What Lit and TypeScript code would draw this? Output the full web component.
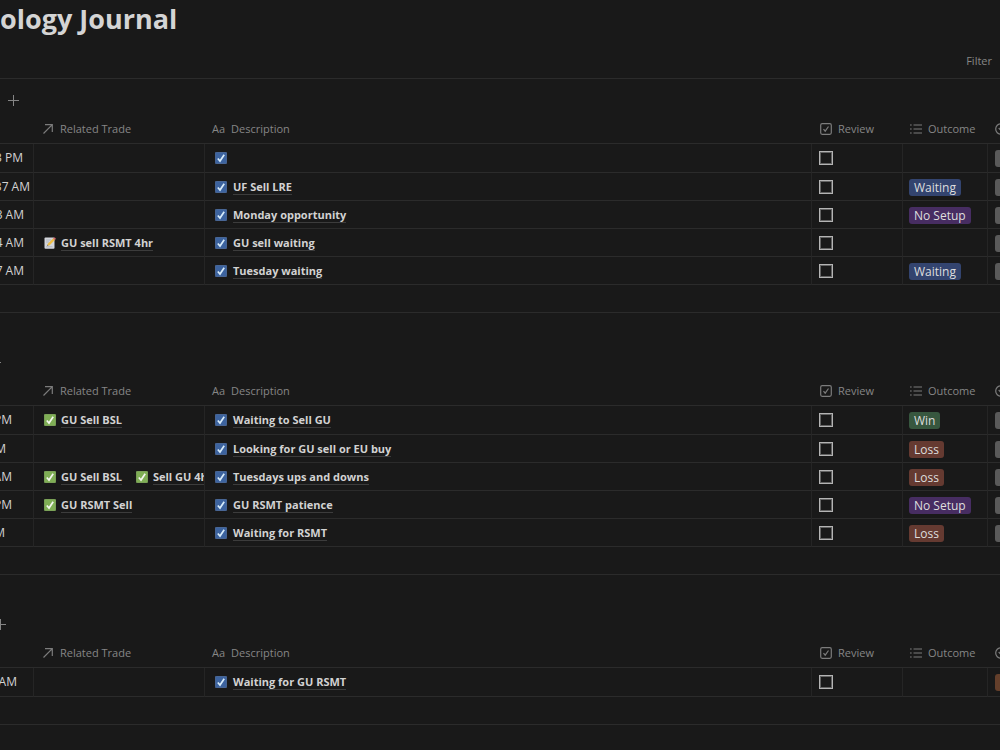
import { LitElement, html, css, svg, nothing } from "lit";
import { customElement, property } from "lit/decorators.js";

type Icon = "check" | "memo";
interface Trade { icon: Icon; name: string; }
interface Entry {
  time: string;
  timeEnd: number;
  trades?: Trade[];
  title?: string;
  outcome?: "Waiting" | "No Setup" | "Win" | "Loss";
  grade?: "gray" | "brown";
}
interface View { addStart: number; entries: Entry[]; }

const views: View[] = [
  {
    addStart: 8,
    entries: [
      { time: "3 PM", timeEnd: 23 },
      { time: "37 AM", timeEnd: 30, title: "UF Sell LRE", outcome: "Waiting" },
      { time: "3 AM", timeEnd: 24, title: "Monday opportunity", outcome: "No Setup" },
      { time: "4 AM", timeEnd: 24, trades: [{ icon: "memo", name: "GU sell RSMT 4hr" }], title: "GU sell waiting" },
      { time: "7 AM", timeEnd: 24, title: "Tuesday waiting", outcome: "Waiting" },
    ],
  },
  {
    addStart: -10,
    entries: [
      { time: "PM", timeEnd: 12, trades: [{ icon: "check", name: "GU Sell BSL" }], title: "Waiting to Sell GU", outcome: "Win" },
      { time: "M", timeEnd: 6, title: "Looking for GU sell or EU buy", outcome: "Loss" },
      {
        time: "AM", timeEnd: 12,
        trades: [{ icon: "check", name: "GU Sell BSL" }, { icon: "check", name: "Sell GU 4hr" }],
        title: "Tuesdays ups and downs", outcome: "Loss",
      },
      { time: "PM", timeEnd: 12, trades: [{ icon: "check", name: "GU RSMT Sell" }], title: "GU RSMT patience", outcome: "No Setup" },
      { time: "M", timeEnd: 5, title: "Waiting for RSMT", outcome: "Loss" },
    ],
  },
  {
    addStart: -5,
    entries: [{ time: "AM", timeEnd: 17, title: "Waiting for GU RSMT", grade: "brown" }],
  },
];

const checkEmoji = (fill: string, edge: string, tick: string) => html`<svg class="emoji" viewBox="0 0 12 12" aria-hidden="true">
  ${svg`<rect x="0.3" y="0.3" width="11.4" height="11.4" rx="1" fill=${fill} stroke=${edge} stroke-width="0.6"/>
  <path d="M2.8 6.5 5 9 9.2 2.8" fill="none" stroke=${tick} stroke-width="1.7"/>`}
</svg>`;

const memoEmoji = html`<svg class="emoji" viewBox="0 0 12 12" aria-hidden="true">
  <rect x="0.5" y="0.5" width="10" height="11.2" rx="1" fill="#d3d6dc"/>
  <path d="M2 3h5M2 5h3M2 9.8h6.500" stroke="#a3a9b4" stroke-width="0.7"/>
  <path d="M3.200 8.800 4 6.400 9 1.400 10.800 3.100 5.700 8.200Z" fill="#edbd45"/>
  <path d="M9 1.400 9.900 0.500Q10.800 0.200 11.500 1.100 11.900 1.800 11.500 2.400L10.800 3.100Z" fill="#d46a6a"/>
  <path d="M3.200 8.800 3.600 7.600 4.400 8.400Z" fill="#444"/>
</svg>`;

@customElement("journal-table")
export class JournalTable extends LitElement {
  @property({ attribute: false }) entries: Entry[] = [];

  static styles = css`
    :host { display: block; }
    table { width: 100%; table-layout: fixed; border-collapse: separate; border-spacing: 0; }
    .c-time { width: 34px; }
    .c-trade { width: 171px; }
    .c-review { width: 91px; }
    .c-outcome { width: 85px; }
    .c-grade { width: 12px; }
    th, td { padding: 0; overflow: hidden; white-space: nowrap; text-align: left; box-sizing: border-box; vertical-align: middle; line-height: 16px; }
    th { height: 29px; border-bottom: 1px solid #2b2b2b; font-size: 11px; font-weight: 400; color: #868686; }
    td { height: 28px; border-bottom: 1px solid #2b2b2b; border-right: 1px solid #252525; color: #d2d2d2; }
    td:last-child { border-right: none; }
    tr.first td { height: 29px; }
    .cell { display: flex; align-items: center; }
    .head { gap: 6px; }
    .icon { width: 12px; height: 12px; flex: none; fill: none; stroke: #7c7c7c; stroke-width: 1.2; }
    .pad { padding-left: 8px; }
    .pad-desc { padding-left: 7px; }
    .head-desc { gap: 6px; }
    .trades { padding-left: 10px; gap: 14px; }
    .title { padding-left: 10px; }
    .link { display: flex; align-items: center; gap: 6px; flex: none; color: #d2d2d2; font-size: 11px; font-weight: 700; text-decoration: none; }
    .trades .link { gap: 5px; }
    .name { border-bottom: 1px solid #3c3c3c; line-height: 15px; }
    .emoji { width: 12px; height: 12px; flex: none; display: block; }
    .time { display: flex; justify-content: flex-end; }
    .box { appearance: none; width: 14px; height: 14px; margin: 0 0 0 7px; border: 1px solid #b4b4b4; outline: 1px solid #626262; outline-offset: -2px; display: block; }
    .tag { height: 17px; line-height: 17px; margin-left: 6px; margin-top: 1px; padding: 0 5px; border-radius: 3px; color: #dedede; }
    .waiting { background: #33446f; }
    .nosetup { background: #472d62; }
    .win { background: #37573f; }
    .loss { background: #653a31; }
    .chip { width: 24px; height: 17px; margin-left: 7px; margin-top: 1px; border-radius: 3px; flex: none; }
    .gray { background: #5a5a5a; }
    .brown { background: #643f2b; }
  `;

  private row(e: Entry, i: number) {
    const label = e.title ?? "Untitled";
    return html`<tr class=${i === 0 ? "first" : ""}>
      <td><div class="time" style="padding-right:${33 - e.timeEnd}px">${e.time}</div></td>
      <td>
        <div class="cell trades">
          ${(e.trades ?? []).map((t) => html`<a class="link" href="#">
            ${t.icon === "memo" ? memoEmoji : checkEmoji("#7fae55", "#93bd6b", "#f4f7ef")}<span class="name">${t.name}</span>
          </a>`)}
        </div>
      </td>
      <td>
        <div class="cell title">
          <a class="link" href="#" aria-label=${label}>
            ${checkEmoji("#3c639f", "#6180b0", "#d8ecfa")}${e.title ? html`<span class="name">${e.title}</span>` : nothing}
          </a>
        </div>
      </td>
      <td><input class="box" type="checkbox" aria-label="Review ${label}" /></td>
      <td>
        <div class="cell">
          ${e.outcome ? html`<span class="tag ${e.outcome.toLowerCase().replace(" ", "")}">${e.outcome}</span>` : nothing}
        </div>
      </td>
      <td><div class="cell"><span class="chip ${e.grade ?? "gray"}"></span></div></td>
    </tr>`;
  }

  render() {
    return html`<table>
      <colgroup>
        <col class="c-time" /><col class="c-trade" /><col /><col class="c-review" /><col class="c-outcome" /><col class="c-grade" />
      </colgroup>
      <thead>
        <tr>
          <th></th>
          <th><div class="cell head pad">
            <svg class="icon" viewBox="0 0 12 12" aria-hidden="true"><path d="M1.500 10.500 10.300 1.700M3 1.700H10.300V9" /></svg>Related Trade
          </div></th>
          <th><div class="cell head-desc pad-desc"><span>Aa</span><span>Description</span></div></th>
          <th><div class="cell head pad">
            <svg class="icon" viewBox="0 0 12 12" aria-hidden="true"><rect x="0.700" y="0.700" width="10.600" height="10.600" rx="1.500" /><path d="M3.500 6.200 5.200 8.200 8.500 3.500" /></svg>Review
          </div></th>
          <th><div class="cell head pad-desc">
            <svg class="icon" viewBox="0 0 12 12" aria-hidden="true"><path d="M0 2H1.700M0 6H1.700M0 10H1.700M3.500 2H12M3.500 6H12M3.500 10H12" /></svg>Outcome
          </div></th>
          <th><div class="cell pad-desc">
            <svg class="icon" viewBox="0 0 12 12" aria-hidden="true"><circle cx="6" cy="6" r="5.300" /><path d="M3.700 5 6 7.500 8.300 5" /></svg>
          </div></th>
        </tr>
      </thead>
      <tbody>${this.entries.map((e, i) => this.row(e, i))}</tbody>
    </table>`;
  }
}

@customElement("app-root")
export class AppRoot extends LitElement {
  static styles = css`
    :host { display: block; min-height: 100vh; overflow: hidden; background: #191919; color: #d2d2d2; font: 12px/16px "Open Sans", "Noto Sans", sans-serif; }
    button { background: none; border: none; padding: 0; margin: 0; font: inherit; color: #868686; }
    .title { margin: 0; height: 44px; font-size: 27px; line-height: 38px; font-weight: 700; color: #d4d4d4; white-space: nowrap; }
    .toolbar { display: flex; justify-content: flex-end; align-items: center; height: 34px; padding-right: 8px; border-bottom: 1px solid #2b2b2b; font-size: 11px; }
    .view { border-bottom: 1px solid #2b2b2b; padding-bottom: 27px; }
    .view + .view { padding-top: 28px; }
    .tabs { display: flex; align-items: center; height: 30px; padding-top: 6px; overflow: hidden; }
    .add { display: block; width: 11px; height: 11px; flex: none; }
    .plus { display: block; width: 11px; height: 11px; stroke: #858585; stroke-width: 1; }
  `;

  render() {
    return html`
      <h1 class="title">ology Journal</h1>
      <div class="toolbar"><button>Filter</button></div>
      ${views.map((v) => html`<section class="view">
        <div class="tabs">
          <button class="add" aria-label="Add view" style="margin-left:${v.addStart}px">
            <svg class="plus" viewBox="0 0 11 11" aria-hidden="true"><path d="M0 5.500H11M5.500 0V11" /></svg>
          </button>
        </div>
        <journal-table .entries=${v.entries}></journal-table>
      </section>`)}
    `;
  }
}
